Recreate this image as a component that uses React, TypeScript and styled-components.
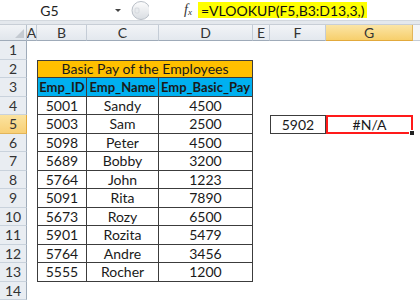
import React from 'react'
import styled, {createGlobalStyle} from 'styled-components'

const GlobalStyle = createGlobalStyle`
  body {
    margin: 0;
    background: #fff;
    font-family: Lato, "Liberation Sans", sans-serif;
    color: #1a1a1a;
  }
`

const cols = ['A', 'B', 'C', 'D', 'E', 'F', 'G']
const rows = [
  ['5001', 'Sandy', '4500'],
  ['5003', 'Sam', '2500'],
  ['5098', 'Peter', '4500'],
  ['5689', 'Bobby', '3200'],
  ['5764', 'John', '1223'],
  ['5091', 'Rita', '7890'],
  ['5673', 'Rozy', '6500'],
  ['5901', 'Rozita', '5479'],
  ['5764', 'Andre', '3456'],
  ['5555', 'Rocher', '1200'],
]

export default function App() {
  return (
    <Window>
      <GlobalStyle />
      <FormulaBar>
        <NameBox>
          <NameText>G5</NameText>
          <Caret />
        </NameBox>
        <Knob>
          <svg width="22" height="21" viewBox="0 0 22 21">
            <defs>
              <linearGradient id="kg" x1="0" y1="0" x2="0" y2="1">
                <stop offset="0" stopColor="#fdfdfd" />
                <stop offset="1" stopColor="#d9dde2" />
              </linearGradient>
            </defs>
            <circle cx="14" cy="10.5" r="9" fill="url(#kg)" stroke="#b9bfc7" />
            <rect x="8" y="8" width="4" height="5" rx="1" fill="#e8ebee" stroke="#c9ced4" strokeWidth="0.6" />
          </svg>
        </Knob>
        <Fx>
          f<sub>x</sub>
        </Fx>
        <Formula>=VLOOKUP(F5,B3:D13,3,)</Formula>
      </FormulaBar>
      <Band />
      <Sheet>
        <Corner />
        {cols.map((c, i) => (
          <ColHeader key={c} $active={c === 'G'} style={{gridColumn: i + 2}}>
            {c}
          </ColHeader>
        ))}
        <ColFiller />
        {Array.from({length: 14}, (_, i) => (
          <RowHeader key={i} $active={i === 4} style={{gridRow: i + 2}}>
            {i + 1}
          </RowHeader>
        ))}

        <Cell $bg="#ffc000" $top $left style={{gridColumn: '3 / 6', gridRow: 3}}>
          Basic Pay of the Employees
        </Cell>
        {['Emp_ID', 'Emp_Name', 'Emp_Basic_Pay'].map((h, i) => (
          <Cell key={h} $bg="#00b0f0" $bold $left={i === 0} style={{gridColumn: i + 3, gridRow: 4}}>
            {h}
          </Cell>
        ))}
        {rows.map((r, ri) =>
          r.map((v, ci) => (
            <Cell key={`${ri}-${ci}`} $left={ci === 0} style={{gridColumn: ci + 3, gridRow: ri + 5}}>
              {v}
            </Cell>
          )),
        )}

        <Cell $top $left style={{gridColumn: 7, gridRow: 6}}>
          5902
        </Cell>
        <Selected style={{gridColumn: 8, gridRow: 6}}>
          #N/A
          <Handle />
        </Selected>
      </Sheet>
    </Window>
  )
}

const Window = styled.div`
  width: 420px;
  height: 300px;
  overflow: hidden;
  background: #fff;
`

const FormulaBar = styled.div`
  display: flex;
  align-items: center;
  height: 21px;
  border-bottom: 1px solid #d3d8de;
  box-sizing: border-box;
  background: #fff;
  font-size: 14px;
`

const NameBox = styled.div`
  display: flex;
  align-items: center;
  width: 127px;
  padding-right: 6px;
  box-sizing: border-box;
`

const NameText = styled.span`
  flex: 1;
  text-align: center;
  padding-right: 16px;
  color: #222;
`

const Caret = styled.span`
  width: 0;
  height: 0;
  border-left: 3px solid transparent;
  border-right: 3px solid transparent;
  border-top: 3px solid #444;
`

const Knob = styled.div`
  display: flex;
  width: 22px;
  height: 21px;
`

const Fx = styled.span`
  margin-left: 35px;
  width: 14px;
  font-family: "Liberation Serif", serif;
  font-style: italic;
  font-size: 14px;
  color: #333;

  sub {
    font-size: 9px;
    vertical-align: -1px;
  }
`

const Formula = styled.span`
  display: flex;
  align-items: center;
  height: 16px;
  padding: 0 3px;
  background: #ffff00;
  color: #111;
  font-size: 14px;
`

const Band = styled.div`
  height: 3px;
  background: #e4e8ed;
  border-bottom: 1px solid #c8ced6;
`

const Sheet = styled.div`
  display: grid;
  grid-template-columns: 27px 10px 50px 72px 94px 17px 56px 87px 1fr;
  grid-template-rows: 16px repeat(14, 18.5px);
  font-size: 14px;
`

const Corner = styled.div`
  grid-column: 1;
  grid-row: 1;
  position: relative;
  background: linear-gradient(#f1f3f6, #e1e6ec);
  border-right: 1px solid #b7c1cc;
  border-bottom: 1px solid #9fabb9;

  &::after {
    content: '';
    position: absolute;
    right: 2px;
    bottom: 2px;
    border-left: 9px solid transparent;
    border-bottom: 9px solid #c4cad1;
  }
`

const ColHeader = styled.div<{$active?: boolean}>`
  grid-row: 1;
  display: flex;
  align-items: center;
  justify-content: center;
  box-sizing: border-box;
  background: ${(p) => (p.$active ? 'linear-gradient(#fbe5a6, #f7cf6c)' : 'linear-gradient(#f2f4f7, #e3e8ee)')};
  border-right: 1px solid ${(p) => (p.$active ? '#e2b55a' : '#c4ccd6')};
  border-bottom: 1px solid ${(p) => (p.$active ? '#e2a93c' : '#9fabb9')};
  color: #333;
  font-size: 14px;
`

const ColFiller = styled.div`
  grid-column: 9;
  grid-row: 1;
  background: #f3f5f8;
  border-bottom: 1px solid #c5ccd5;
`

const RowHeader = styled.div<{$active?: boolean}>`
  grid-column: 1;
  display: flex;
  align-items: center;
  justify-content: center;
  box-sizing: border-box;
  background: ${(p) => (p.$active ? 'linear-gradient(#fbe39f, #f8d077)' : '#e9edf2')};
  border-right: 1px solid ${(p) => (p.$active ? '#e2a93c' : '#9fabb9')};
  border-bottom: 1px solid ${(p) => (p.$active ? '#e2b55a' : '#c9d2dc')};
  color: #333;
  font-size: 14px;
`

const Cell = styled.div<{$bg?: string; $bold?: boolean; $top?: boolean; $left?: boolean}>`
  display: flex;
  align-items: center;
  justify-content: center;
  box-sizing: border-box;
  background: ${(p) => p.$bg || '#fff'};
  font-weight: ${(p) => (p.$bold ? 700 : 400)};
  font-size: ${(p) => (p.$bold ? '13px' : '14px')};
  border-right: 1px solid #3c3c3c;
  border-bottom: 1px solid #3c3c3c;
  border-top: ${(p) => (p.$top ? '1px solid #3c3c3c' : 'none')};
  border-left: ${(p) => (p.$left ? '1px solid #3c3c3c' : 'none')};
  color: #1a1a1a;
  white-space: nowrap;
  overflow: hidden;
`

const Selected = styled.div`
  position: relative;
  display: flex;
  align-items: center;
  justify-content: center;
  box-sizing: border-box;
  border: 2px solid #ff1a1a;
  color: #1a1a1a;
`

const Handle = styled.span`
  position: absolute;
  right: -4px;
  bottom: -4px;
  width: 4px;
  height: 4px;
  background: #222;
  border: 1px solid #fff;
`
